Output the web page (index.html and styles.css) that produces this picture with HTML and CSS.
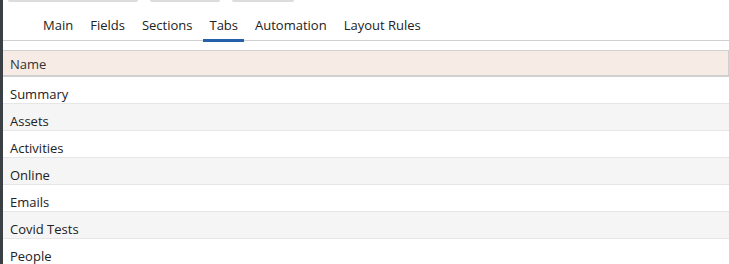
FILE: index.html
```html
<!DOCTYPE html>
<html>
<head>
<meta charset="utf-8">
<link rel="stylesheet" href="styles.css">
</head>
<body>
<div class="page">
  <div class="rail"></div>
  <div class="content">
    <div class="toolbar">
      <div class="btn b1"></div>
      <div class="btn b2"></div>
      <div class="btn b3"></div>
    </div>
    <nav class="tabs">
      <a class="tab">Main</a>
      <a class="tab">Fields</a>
      <a class="tab">Sections</a>
      <a class="tab active">Tabs</a>
      <a class="tab">Automation</a>
      <a class="tab">Layout Rules</a>
    </nav>
    <div class="grid">
      <div class="head">Name</div>
      <div class="row">Summary</div>
      <div class="row alt">Assets</div>
      <div class="row">Activities</div>
      <div class="row alt">Online</div>
      <div class="row">Emails</div>
      <div class="row alt">Covid Tests</div>
      <div class="row">People</div>
    </div>
  </div>
</div>
</body>
</html>
```
FILE: styles.css
```css
html, body {
  margin: 0;
  padding: 0;
  background: #ffffff;
  font-family: "Open Sans", "Noto Sans", sans-serif;
  font-size: 13px;
  color: #222222;
}
.page {
  display: flex;
  height: 264px;
  overflow: hidden;
}
.rail {
  width: 3px;
  flex: 0 0 3px;
  background: #3b4045;
}
.content {
  flex: 1;
  display: flex;
  flex-direction: column;
}
.content > * {
  flex-shrink: 0;
}
.toolbar {
  display: flex;
  height: 2px;
  padding-left: 5px;
  gap: 12px;
}
.btn {
  height: 2px;
  background: #dcdcdc;
  border-radius: 0 0 2px 2px;
}
.b1 { width: 130px; }
.b2 { width: 70px; }
.b3 { width: 62px; }
.tabs {
  display: flex;
  height: 38px;
  padding-left: 34px;
  gap: 5px;
  border-bottom: 1px solid #d0d0d0;
  margin-bottom: 9px;
}
.tab {
  display: flex;
  align-items: center;
  padding: 8px 6px 0;
  color: #222222;
  position: relative;
}
.tab.active::after {
  content: "";
  position: absolute;
  left: 0;
  right: 0;
  bottom: -2px;
  height: 3px;
  background: #2560a8;
}
.grid {
  display: flex;
  flex-direction: column;
}
.grid > * {
  flex-shrink: 0;
}
.head {
  height: 23px;
  padding-top: 1px;
  line-height: 24px;
  padding-left: 7px;
  background: #f7ece5;
  border-top: 1px solid #d0d0d0;
  border-right: 1px solid #d0d0d0;
  border-bottom: 2px solid #d0d0d0;
  color: #333333;
}
.row {
  height: 22px;
  padding-top: 4px;
  line-height: 26px;
  padding-left: 7px;
  border-bottom: 1px solid #e6e6e6;
}
.row.alt {
  background: #f5f5f5;
}
```
